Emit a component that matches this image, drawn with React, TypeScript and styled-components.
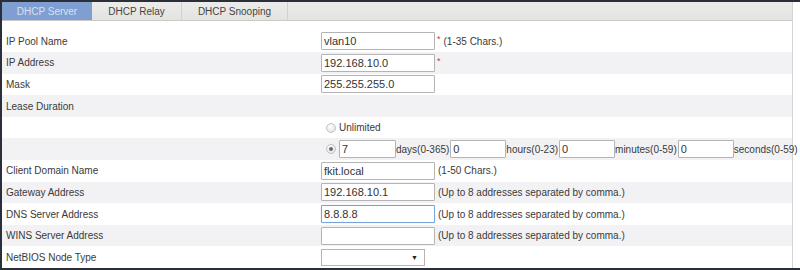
import React from "react";
import styled, { createGlobalStyle } from "styled-components";

const Global = createGlobalStyle`
  html, body { margin: 0; padding: 0; background: #ffffff; }
  body { font-family: "Liberation Sans", Arial, sans-serif; font-size: 10px; color: #333; }
  * { box-sizing: border-box; }
`;

const Frame = styled.div`
  width: 800px;
  height: 270px;
  overflow: hidden;
  border-top: 2px solid #2b3038;
  border-left: 2px solid #2b3038;
  border-bottom: 2px solid #2b3038;
  background: #ffffff;
`;

const Panel = styled.div`
  width: 791px;
  height: 100%;
  border-right: 1px solid #d4d4d8;
  display: flex;
  flex-direction: column;
`;

const TabBar = styled.div`
  display: flex;
  height: 21px;
  background: linear-gradient(#ececea, #e3e4e0);
  border-bottom: 1px solid #c9cac8;
`;

const Tab = styled.div<{ $active?: boolean; $w: number }>`
  width: ${(p) => p.$w}px;
  display: flex;
  align-items: center;
  justify-content: center;
  font-size: 10px;
  color: ${(p) => (p.$active ? "#d6e0f2" : "#444")};
  background: ${(p) => (p.$active ? "#7f9fd3" : "transparent")};
  border-right: ${(p) => (p.$active ? "none" : "1px solid #d2d3d0")};
`;

const Body = styled.div`
  padding-top: 9px;
  display: flex;
  flex-direction: column;
`;

const Row = styled.div<{ $alt?: boolean }>`
  display: grid;
  grid-template-columns: 319px 1fr;
  height: 21.6px;
  align-items: center;
  background: ${(p) => (p.$alt ? "#f2f2f4" : "#ffffff")};
`;

const Label = styled.div`
  padding-left: 4px;
  font-size: 10px;
  color: #3a3a3a;
  white-space: nowrap;
`;

const Value = styled.div`
  display: flex;
  align-items: center;
  white-space: nowrap;
`;

const TextInput = styled.input<{ $w?: number; $focus?: boolean }>`
  width: ${(p) => p.$w ?? 114}px;
  height: 18px;
  padding: 0 2px;
  border: 1px solid ${(p) => (p.$focus ? "#7aa3d9" : "#b4b4b4")};
  border-radius: 1px;
  background: #fff;
  font-family: "Liberation Sans", Arial, sans-serif;
  font-size: 11px;
  color: #333;
  outline: none;
  box-shadow: ${(p) => (p.$focus ? "0 0 1px #9bbbe6" : "none")};
`;

const Required = styled.span`
  color: #e03030;
  font-size: 9px;
  margin-left: 2px;
  align-self: flex-start;
  margin-top: 2px;
`;

const Hint = styled.span<{ $gap?: number }>`
  margin-left: ${(p) => p.$gap ?? 3}px;
  font-size: 10px;
  color: #3a3a3a;
`;

const Unit = styled.span`
  font-size: 10px;
  color: #3a3a3a;
  margin: 0 1px 0 0;
`;

const Radio = styled.span<{ $checked?: boolean }>`
  width: 10px;
  height: 10px;
  border-radius: 50%;
  margin: 0 3px 0 5px;
  border: 1px solid #c4c4c4;
  background: radial-gradient(circle at 40% 35%, #ffffff, #dcdcdc);
  display: flex;
  align-items: center;
  justify-content: center;
  flex-shrink: 0;
  &::after {
    content: "";
    width: 4px;
    height: 4px;
    border-radius: 50%;
    background: ${(p) => (p.$checked ? "#6a6a6a" : "transparent")};
  }
`;

const RadioText = styled.span`
  font-size: 10px;
  color: #3a3a3a;
`;

const SelectBox = styled.div`
  width: 104px;
  height: 17px;
  border: 1px solid #b4b4b4;
  background: #fff;
  display: flex;
  align-items: center;
  justify-content: flex-end;
  padding-right: 6px;
  font-size: 7px;
  color: #222;
`;

export default function App() {
  return (
    <>
      <Global />
      <Frame>
        <Panel>
          <TabBar>
            <Tab $active $w={90}>DHCP Server</Tab>
            <Tab $w={90}>DHCP Relay</Tab>
            <Tab $w={106}>DHCP Snooping</Tab>
          </TabBar>
          <Body>
            <Row>
              <Label>IP Pool Name</Label>
              <Value>
                <TextInput defaultValue="vlan10" />
                <Required>*</Required>
                <Hint $gap={3}>(1-35 Chars.)</Hint>
              </Value>
            </Row>
            <Row $alt>
              <Label>IP Address</Label>
              <Value>
                <TextInput defaultValue="192.168.10.0" />
                <Required>*</Required>
              </Value>
            </Row>
            <Row>
              <Label>Mask</Label>
              <Value>
                <TextInput defaultValue="255.255.255.0" />
              </Value>
            </Row>
            <Row $alt>
              <Label>Lease Duration</Label>
              <Value />
            </Row>
            <Row>
              <Label />
              <Value>
                <Radio />
                <RadioText>Unlimited</RadioText>
              </Value>
            </Row>
            <Row $alt>
              <Label />
              <Value>
                <Radio $checked />
                <TextInput $w={57} defaultValue="7" />
                <Unit>days(0-365)</Unit>
                <TextInput $w={56} defaultValue="0" />
                <Unit>hours(0-23)</Unit>
                <TextInput $w={56} defaultValue="0" />
                <Unit>minutes(0-59)</Unit>
                <TextInput $w={56} defaultValue="0" />
                <Unit>seconds(0-59)</Unit>
              </Value>
            </Row>
            <Row>
              <Label>Client Domain Name</Label>
              <Value>
                <TextInput defaultValue="fkit.local" />
                <Hint>(1-50 Chars.)</Hint>
              </Value>
            </Row>
            <Row $alt>
              <Label>Gateway Address</Label>
              <Value>
                <TextInput defaultValue="192.168.10.1" />
                <Hint>(Up to 8 addresses separated by comma.)</Hint>
              </Value>
            </Row>
            <Row>
              <Label>DNS Server Address</Label>
              <Value>
                <TextInput $focus defaultValue="8.8.8.8" />
                <Hint>(Up to 8 addresses separated by comma.)</Hint>
              </Value>
            </Row>
            <Row $alt>
              <Label>WINS Server Address</Label>
              <Value>
                <TextInput defaultValue="" />
                <Hint>(Up to 8 addresses separated by comma.)</Hint>
              </Value>
            </Row>
            <Row>
              <Label>NetBIOS Node Type</Label>
              <Value>
                <SelectBox>▼</SelectBox>
              </Value>
            </Row>
          </Body>
        </Panel>
      </Frame>
    </>
  );
}
